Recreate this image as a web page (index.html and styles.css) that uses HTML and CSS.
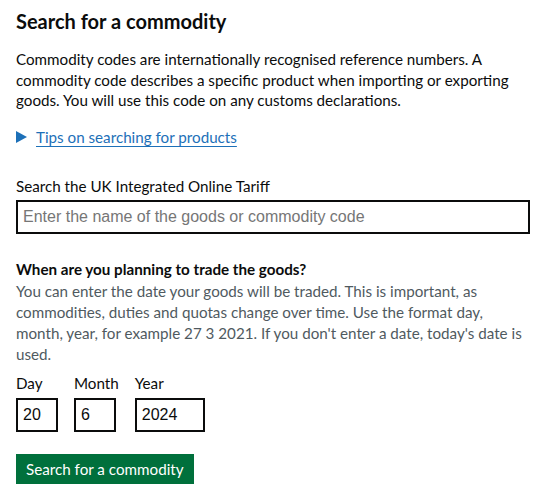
FILE: index.html
```html
<!DOCTYPE html>
<html lang="en">
<head>
<meta charset="utf-8">
<title>Search for a commodity</title>
<link rel="stylesheet" href="styles.css">
</head>
<body>
<main class="page">
  <h1 class="heading">Search for a commodity</h1>
  <p class="body">Commodity codes are internationally recognised reference numbers. A commodity code describes a specific product when importing or exporting goods. You will use this code on any customs declarations.</p>
  <div class="details">
    <svg class="arrow" width="11" height="12" viewBox="0 0 11 12"><polygon points="0,0 11,6 0,12" fill="#1d70b8"/></svg>
    <a class="link" href="#">Tips on searching for products</a>
  </div>
  <div class="field">
    <label class="label" for="q">Search the UK Integrated Online Tariff</label>
    <input class="input" id="q" type="text" placeholder="Enter the name of the goods or commodity code">
  </div>
  <fieldset class="fieldset">
    <legend class="legend">When are you planning to trade the goods?</legend>
    <p class="hint">You can enter the date your goods will be traded. This is important, as commodities, duties and quotas change over time. Use the format day, month, year, for example 27 3 2021. If you don't enter a date, today's date is used.</p>
    <div class="date">
      <div class="date-item">
        <label class="date-label">Day</label>
        <input class="date-input w2" type="text" value="20">
      </div>
      <div class="date-item">
        <label class="date-label">Month</label>
        <input class="date-input w2" type="text" value="6">
      </div>
      <div class="date-item">
        <label class="date-label">Year</label>
        <input class="date-input w4" type="text" value="2024">
      </div>
    </div>
  </fieldset>
  <button class="button" type="button">Search for a commodity</button>
</main>
</body>
</html>
```

FILE: styles.css
```css
* { box-sizing: border-box; }
body {
  margin: 0;
  background: #fff;
  color: #0b0c0c;
  font-family: Lato, "Noto Sans", Arial, sans-serif;
}
.page {
  padding: 9px 16px 0 16px;
}
.heading {
  margin: 0;
  font-size: 20px;
  line-height: 24px;
  font-weight: 700;
}
.body {
  margin: 16px 0 0 0;
  font-size: 15.2px;
  line-height: 20.5px;
}
.details {
  margin-top: 16px;
  display: flex;
  align-items: center;
  gap: 9px;
  height: 20px;
}
.arrow { display: block; }
.link {
  color: #1d70b8;
  font-size: 15.2px;
  line-height: 20px;
  text-decoration: underline;
  text-underline-offset: 3px;
  text-decoration-thickness: 1px;
}
.field { margin-top: 29px; }
.label {
  display: block;
  font-size: 15.2px;
  line-height: 20px;
  margin-bottom: 4px;
}
.input {
  display: block;
  width: 514px;
  height: 34px;
  border: 2px solid #0b0c0c;
  padding: 0 5px;
  font-family: "Liberation Sans", Arial, sans-serif;
  font-size: 16px;
  color: #0b0c0c;
  background: #fff;
}
.input::placeholder { color: #767676; }
.fieldset {
  border: 0;
  margin: 25px 0 0 0;
  padding: 0;
}
.legend {
  padding: 0;
  font-size: 15.2px;
  line-height: 20px;
  font-weight: 700;
}
.hint {
  margin: 2px 0 0 0;
  color: #505a5f;
  font-size: 15.2px;
  line-height: 21px;
}
.date {
  margin-top: 8px;
  display: flex;
  gap: 16px;
}
.date-item { display: flex; flex-direction: column; }
.date-label {
  font-size: 15.2px;
  line-height: 20px;
  margin-bottom: 5px;
}
.date-input {
  height: 34px;
  border: 2px solid #0b0c0c;
  padding: 0 5px;
  font-family: "Liberation Sans", Arial, sans-serif;
  font-size: 16px;
  color: #0b0c0c;
  background: #fff;
}
.w2 { width: 42px; }
.w4 { width: 70px; }
.button {
  display: block;
  margin-top: 22px;
  background: #00703c;
  color: #fff;
  border: 0;
  box-shadow: 0 2px 0 #002d18;
  font-family: Lato, "Noto Sans", Arial, sans-serif;
  font-size: 15.2px;
  line-height: 20px;
  padding: 5px 10px;
  height: 30px;
  white-space: nowrap;
  text-align: center;
}
```
